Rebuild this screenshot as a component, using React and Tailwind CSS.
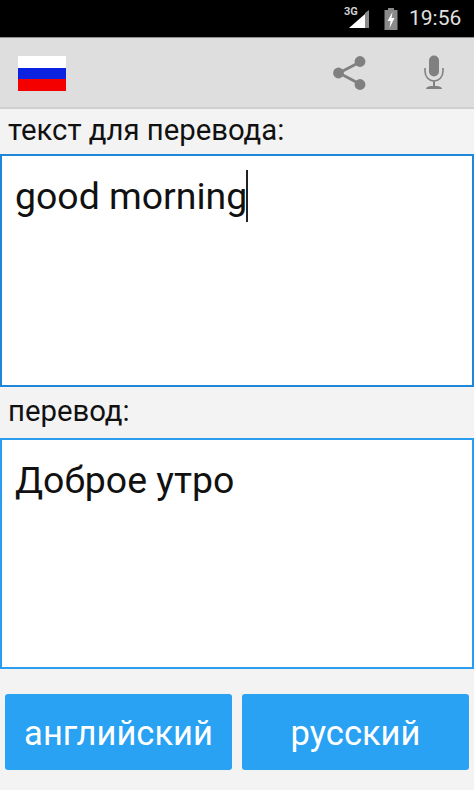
import React from "react";

function Share() {
  return (
    <svg width="36" height="36" viewBox="0 0 36 36" className="block">
      <path d="M28 7 L7 18 L28 29" fill="none" stroke="#808080" strokeWidth="2.8" />
      <circle cx="28" cy="6.5" r="5.4" fill="#808080" />
      <circle cx="6.5" cy="18" r="5.4" fill="#808080" />
      <circle cx="28" cy="29.5" r="5.4" fill="#808080" />
    </svg>
  );
}

function Mic() {
  return (
    <svg width="22" height="36" viewBox="0 0 22 36" className="block">
      <rect x="6" y="0.5" width="10" height="21" rx="5" fill="#808080" />
      <path d="M2 13 V16 C2 22 6 26 11 26 C16 26 20 22 20 16 V13" fill="none" stroke="#808080" strokeWidth="1.6" />
      <rect x="10" y="26" width="2" height="5" fill="#808080" />
      <path d="M3 34 C3 31.5 7 31 11 31 C15 31 19 31.5 19 34 Z" fill="#808080" />
    </svg>
  );
}

function Signal() {
  return (
    <div className="relative w-[26px] h-[20px]">
      <span className="absolute left-0 top-[-3px] text-[11px] leading-[12px] font-bold text-[#cfcfcf] font-['Roboto',sans-serif]">3G</span>
      <svg width="26" height="20" viewBox="0 0 26 20" className="block">
        <path d="M5 19 L21 5 V19 Z" fill="#ffffff" />
        <path d="M21 4 L25 1 V19 H21 Z" fill="#8a8a8a" />
      </svg>
    </div>
  );
}

function Battery() {
  return (
    <svg width="14" height="22" viewBox="0 0 14 22" className="block">
      <rect x="4" y="0" width="6" height="2" fill="#8a8a8a" />
      <rect x="0.5" y="2" width="13" height="20" fill="#8a8a8a" />
      <path d="M8.5 4 L3.5 13 H6.5 L5.5 20 L10.5 10 H7.5 Z" fill="#ffffff" />
    </svg>
  );
}

export default function App() {
  return (
    <div className="w-[474px] h-[790px] flex flex-col bg-[#f3f3f4] overflow-hidden font-['Roboto',sans-serif]">
      <div className="h-[37px] bg-black flex items-center justify-end pr-[12px] shrink-0">
        <Signal />
        <div className="ml-[14px]"><Battery /></div>
        <span className="ml-[11px] text-[21px] leading-none text-[#e0e0e0] w-[53px]">19:56</span>
      </div>
      <div className="h-[72px] shrink-0 bg-[#dedede] border-t border-t-[#8f8f8f] border-b-2 border-b-[#d0d0d0] flex items-center pl-[18px]">
        <div className="w-[48px] h-[35px] mt-[2px] flex flex-col shrink-0">
          <div className="flex-1 bg-white" />
          <div className="flex-1 bg-[#0b22e0]" />
          <div className="flex-1 bg-[#f50000]" />
        </div>
        <div className="ml-[266px]"><Share /></div>
        <div className="ml-[55px]"><Mic /></div>
      </div>
      <div className="h-[45px] shrink-0 pl-[8px] pb-[2px] flex items-center text-[29.3px] leading-none text-[#111111]">текст для перевода:</div>
      <div className="h-[233px] shrink-0 bg-white border-2 border-[#1f86d8] pl-[13px] pt-[18px] text-[37.4px] leading-[44px] text-[#111111] flex items-start">
        <span>good morning</span>
        <span className="w-[1.5px] h-[52px] bg-[#222222] -mt-[4px] -ml-[1px]" />
      </div>
      <div className="h-[51px] shrink-0 pl-[8px] pb-[2px] flex items-center text-[29.3px] leading-none text-[#111111]">перевод:</div>
      <div className="h-[231px] shrink-0 bg-white border-2 border-[#2a9df0] pl-[13px] pt-[18px] text-[37.4px] leading-[44px] text-[#111111]">Доброе утро</div>
      <div className="flex gap-[10px] px-[5px] pt-[25px]">
        <button className="flex-1 h-[76px] pt-[2px] rounded-[3px] bg-[#29a2f3] text-white text-[34.5px] leading-none">английский</button>
        <button className="flex-1 h-[76px] pt-[2px] rounded-[3px] bg-[#29a2f3] text-white text-[34.5px] leading-none">русский</button>
      </div>
    </div>
  );
}
